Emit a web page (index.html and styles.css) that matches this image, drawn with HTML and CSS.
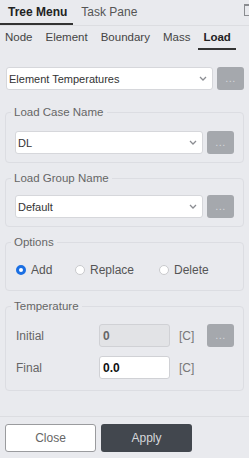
FILE: index.html
```html
<!DOCTYPE html>
<html>
<head>
<meta charset="utf-8">
<link rel="stylesheet" href="styles.css">
</head>
<body>
<div class="panel">
  <div class="tabs-main">
    <div class="tab active">Tree Menu</div>
    <div class="tab">Task Pane</div>
    <svg class="pin" width="10" height="14" viewBox="0 0 10 14"><rect x="1.5" y="2.5" width="7" height="10" fill="none" stroke="#8a8c90" stroke-width="1"/><rect x="1" y="1" width="8" height="2" fill="#8a8c90"/></svg>
  </div>
  <div class="tabs-sub">
    <div class="stab">Node</div>
    <div class="stab">Element</div>
    <div class="stab">Boundary</div>
    <div class="stab">Mass</div>
    <div class="stab active">Load</div>
  </div>
  <div class="content">
    <div class="select-row top-row">
      <div class="select"><span>Element Temperatures</span><svg class="chev" width="8" height="5" viewBox="0 0 8 5"><path d="M1 1 L4 4 L7 1" fill="none" stroke="#8b8d92" stroke-width="1.3"/></svg></div>
      <div class="more">...</div>
    </div>
    <fieldset class="group g-case">
      <legend>Load Case Name</legend>
      <div class="select-row">
        <div class="select"><span>DL</span><svg class="chev" width="8" height="5" viewBox="0 0 8 5"><path d="M1 1 L4 4 L7 1" fill="none" stroke="#8b8d92" stroke-width="1.3"/></svg></div>
        <div class="more">...</div>
      </div>
    </fieldset>
    <fieldset class="group g-group">
      <legend>Load Group Name</legend>
      <div class="select-row">
        <div class="select"><span>Default</span><svg class="chev" width="8" height="5" viewBox="0 0 8 5"><path d="M1 1 L4 4 L7 1" fill="none" stroke="#8b8d92" stroke-width="1.3"/></svg></div>
        <div class="more">...</div>
      </div>
    </fieldset>
    <fieldset class="group g-opt">
      <legend>Options</legend>
      <div class="radios">
        <label class="radio"><span class="dot checked"></span>Add</label>
        <label class="radio"><span class="dot"></span>Replace</label>
        <label class="radio"><span class="dot"></span>Delete</label>
      </div>
    </fieldset>
    <fieldset class="group g-temp">
      <legend>Temperature</legend>
      <div class="temp-grid">
        <div class="lbl">Initial</div>
        <div class="input disabled">0</div>
        <div class="unit">[C]</div>
        <div class="more">...</div>
        <div class="lbl">Final</div>
        <div class="input">0.0</div>
        <div class="unit">[C]</div>
        <div></div>
      </div>
    </fieldset>
  </div>
  <div class="footer">
    <div class="btn close">Close</div>
    <div class="btn apply">Apply</div>
  </div>
</div>
</body>
</html>
```
FILE: styles.css
```css
* { box-sizing: border-box; }
html, body { margin: 0; padding: 0; }
body {
  background: #e9eaee;
  font-family: "Liberation Sans", Arial, sans-serif;
  color: #333;
  overflow: hidden;
}
.panel {
  width: 249px;
  height: 458px;
  display: flex;
  flex-direction: column;
}
.tabs-main {
  height: 26px;
  display: flex;
  align-items: stretch;
  border-bottom: 1px solid #dcdde1;
  overflow: hidden;
}
.tab {
  display: flex;
  align-items: center;
  padding: 0 6px 2px 8px;
  font-size: 12px;
  color: #555;
}
.tab.active {
  font-weight: 700;
  color: #222;
  box-shadow: inset 0 -2px 0 #333;
}
.pin {
  margin-left: auto;
  margin-right: -4px;
  margin-top: 3px;
}
.tabs-sub {
  height: 24px;
  display: flex;
  gap: 3px;
}
.stab {
  display: flex;
  align-items: center;
  padding: 0 5px 2px;
  font-size: 11.5px;
  color: #444;
}
.stab.active {
  font-weight: 700;
  color: #222;
  box-shadow: inset 0 -2px 0 #333;
}
.content {
  padding: 17px 5px 0 5px;
}
.select-row {
  display: flex;
  gap: 4px;
}
.top-row { padding-left: 1px; }
.select {
  flex: 1;
  height: 23px;
  background: #fff;
  border: 1px solid #d6d7db;
  border-radius: 3px;
  display: flex;
  align-items: center;
  justify-content: space-between;
  padding: 0 5px 0 2px;
  font-size: 11px;
  color: #333;
}
.more {
  width: 27px;
  height: 23px;
  background: #a5a8ad;
  border-radius: 3px;
  color: #d4d6da;
  font-size: 11px;
  display: flex;
  align-items: center;
  justify-content: center;
  padding-bottom: 1px;
  letter-spacing: 0.5px;
}
.group {
  margin: 0;
  border: 1px solid #dcdde2;
  border-radius: 4px;
  padding: 10px 9px 8px 9px;
}
.group legend {
  font-size: 11.5px;
  line-height: 15px;
  color: #666;
  padding: 0 3px;
  margin-left: -4px;
}
.g-case { margin-top: 15px; padding-top: 11px; }
.g-group { margin-top: 8px; padding-top: 9px; }
.g-opt { margin-top: 8px; padding-top: 12px; padding-bottom: 12px; }
.g-temp { margin-top: 8px; padding-top: 10px; padding-bottom: 11px; }
.radios {
  display: grid;
  grid-template-columns: 59px 84px auto;
  padding-left: 1px;
}
.radio {
  display: flex;
  align-items: center;
  height: 16px;
  font-size: 12px;
  color: #555;
}
.dot {
  width: 10px;
  height: 10px;
  border-radius: 50%;
  background: #fff;
  border: 1px solid #c9cacd;
  margin-right: 5px;
}
.dot.checked {
  border: 3px solid #1b6fe3;
}
.temp-grid {
  display: grid;
  grid-template-columns: 74px 71px 19px 27px;
  column-gap: 9px;
  row-gap: 9px;
  padding-left: 1px;
  align-items: center;
}
.lbl {
  font-size: 12px;
  color: #666;
}
.input {
  height: 23px;
  background: #fff;
  border: 1px solid #d0d1d5;
  border-radius: 3px;
  display: flex;
  align-items: center;
  padding-left: 3px;
  font-size: 12px;
  font-weight: 700;
  color: #111;
}
.input.disabled {
  background: #e2e3e6;
  color: #666;
}
.unit {
  font-size: 12px;
  color: #777;
}
.footer {
  margin-top: auto;
  border-top: 1px solid #dcdde1;
  padding: 7px 5px 6px;
  display: flex;
  gap: 5px;
}
.btn {
  width: 91px;
  height: 28px;
  border-radius: 3px;
  display: flex;
  align-items: center;
  justify-content: center;
  font-size: 12px;
}
.btn.close {
  background: #fff;
  border: 1px solid #9a9b9e;
  color: #666;
}
.btn.apply {
  background: #42474e;
  color: #d6d8db;
}
```
